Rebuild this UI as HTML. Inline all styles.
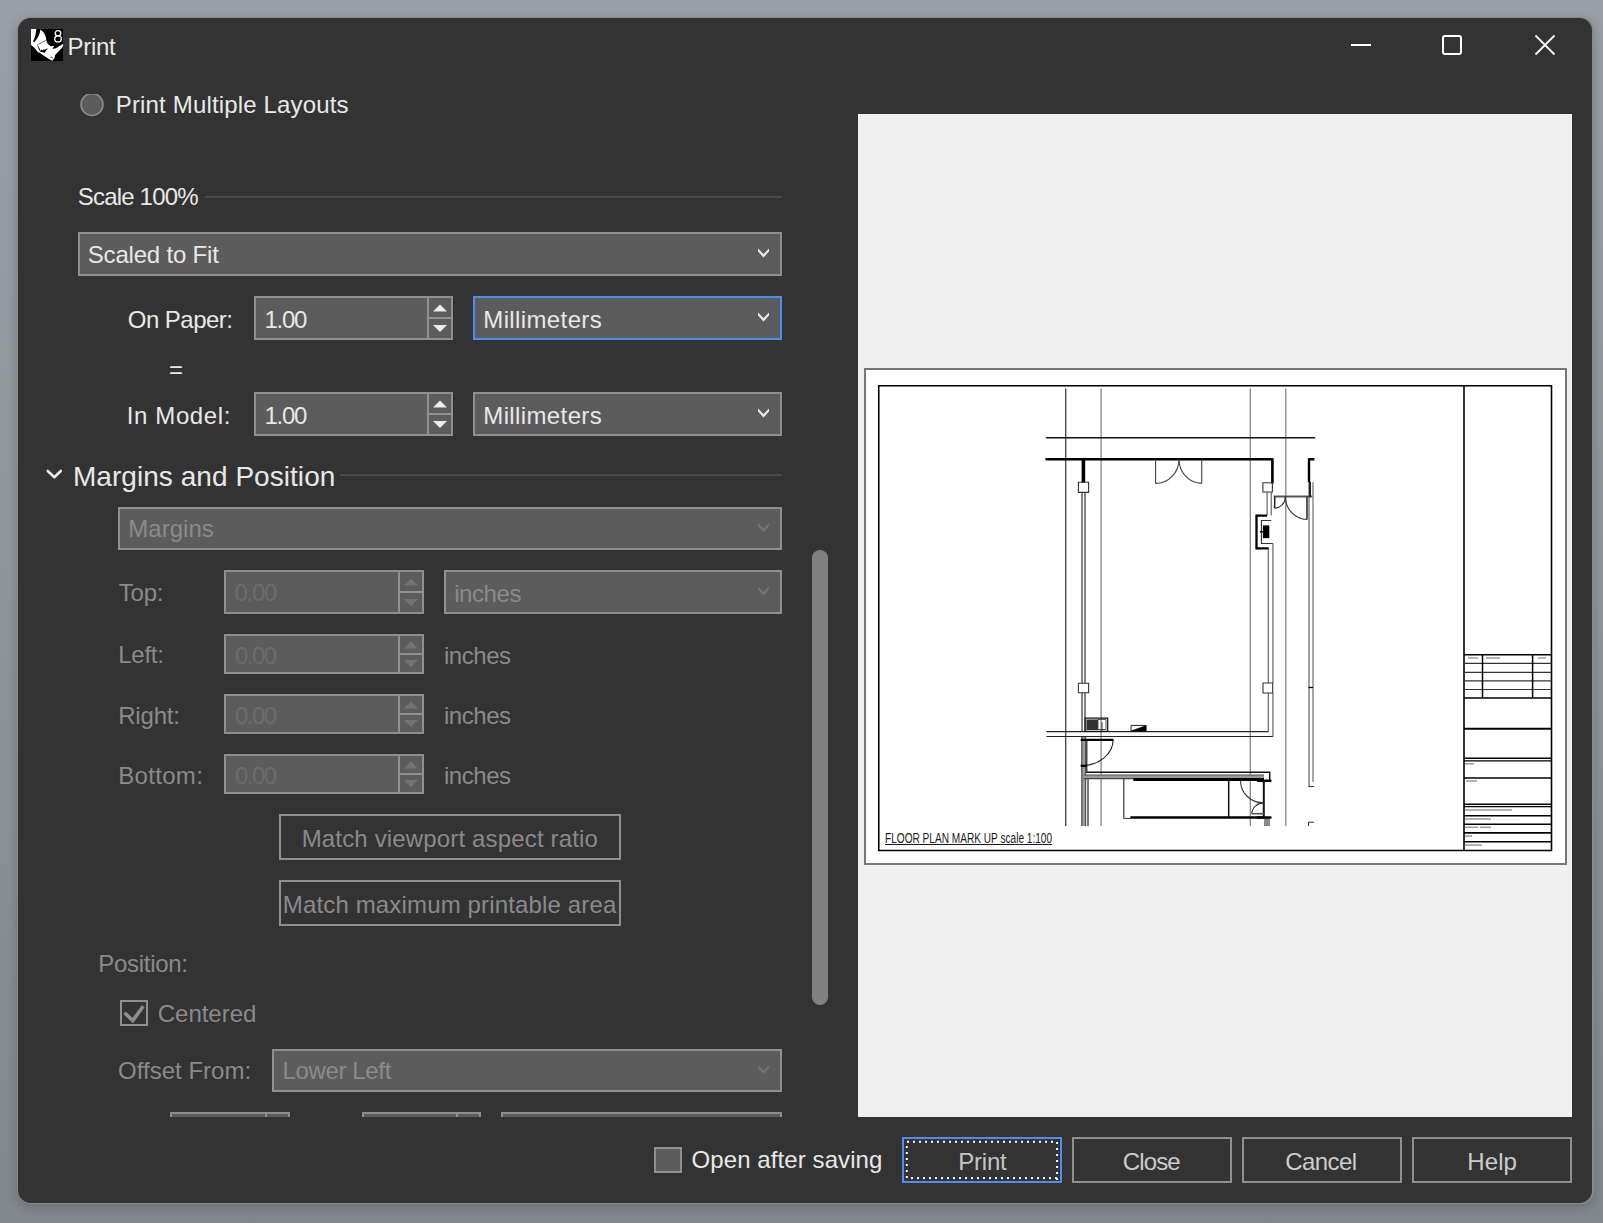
<!DOCTYPE html>
<html><head><meta charset="utf-8">
<style>
html,body{margin:0;padding:0;}
body{width:1603px;height:1223px;overflow:hidden;position:relative;
 background:linear-gradient(180deg,#9a9ea6 0%,#90959c 50%,#82878e 100%);
 font-family:"Liberation Sans",sans-serif;}
.winb{position:absolute;left:16.5px;top:16.5px;width:1577px;height:1187.5px;border-radius:14px;background:#8a8a8a;
 box-shadow:0 3px 12px rgba(0,0,0,0.20);}
.win{position:absolute;left:18px;top:18px;width:1574px;height:1185px;border-radius:12.5px;background:#333333;}
.a{position:absolute;}
.t{position:absolute;white-space:nowrap;font-size:24px;line-height:24px;color:#f0f0f0;}
</style></head><body>
<div class="winb"></div><div class="win"></div>
<svg class="a" style="left:31px;top:29px" width="32" height="32" viewBox="0 0 32 32"><rect width="32" height="32" fill="#000"/><path d="M0 0H9.2L9.4 1C12.6 2.2 14.6 5.6 15.3 10.9C15.8 14.2 18.2 17 21 17.3C21.8 17.3 22.6 17 23.2 16.5C22.8 17.8 22.2 18.9 21.5 19.8C23.5 20.2 26 19 32 14.8V17.6C29.5 20.5 26.5 23.5 24.2 26L23.5 29L21.6 31.6L20 31.2C16 28.8 12 26.2 8.2 23.6L7 23.2C5 20.6 2.6 18 0 16Z" fill="#fff"/><path d="M5.3 -0.2C5.1 4 4.2 8 2.3 12C2 12.8 2.5 13.6 3.2 13.2C5 11.8 6.8 8.5 8 6C8.6 4.4 9.1 2.4 9.3 0.9L9.3 -0.2Z" fill="#000"/><path d="M6.3 16L15.3 11" stroke="#000" stroke-width="0.8" stroke-dasharray="1 0.6"/><path d="M6.3 16.2C7.2 17 8 18.2 8.6 19.6L9.4 22.2L10 20.2L11.5 21.5L12.2 20.6L13.2 20.8L16.8 19.2C15.8 20.8 14.6 22.4 13.8 23.8L9.2 22.8C8.2 21 7.2 19 6.3 16.2Z" fill="#000"/><path d="M19.6 28.8L20.6 27.8L21.4 29.4" stroke="#000" stroke-width="0.7" fill="none"/><ellipse cx="27" cy="4.3" rx="2.8" ry="2.6" stroke="#fff" stroke-width="1.3" fill="none"/><ellipse cx="27" cy="9.9" rx="3.3" ry="3.0" stroke="#fff" stroke-width="1.3" fill="none"/></svg>
<div class="t" style="left:67.50px;top:34.68px;font-size:24px;line-height:24px;color:#e8e8e8;letter-spacing:-0.295px;">Print</div>
<div class="a" style="left:1351px;top:44px;width:20px;height:2px;background:#fff;"></div>
<div class="a" style="left:1442px;top:35px;width:20px;height:20px;box-sizing:border-box;border:2px solid #fff;border-radius:3px"></div>
<div class="t" style="left:115.80px;top:92.98px;font-size:24px;line-height:24px;color:#e8e8e8;letter-spacing:0.155px;">Print Multiple Layouts</div>
<div class="t" style="left:77.75px;top:185.43px;font-size:24px;line-height:24px;color:#e8e8e8;letter-spacing:-0.805px;">Scale 100%</div>
<div class="a" style="left:205px;top:196px;width:577px;height:2px;background:#4a4a4a;"></div>
<div class="a" style="left:78px;top:232px;width:704px;height:44px;box-sizing:border-box;border:2px solid #8f8f8f;background:#5c5c5c;"></div>
<div class="t" style="left:87.75px;top:242.93px;font-size:24px;line-height:24px;color:#e8e8e8;letter-spacing:-0.186px;">Scaled to Fit</div>
<div class="t" style="left:127.75px;top:307.68px;font-size:24px;line-height:24px;color:#e8e8e8;letter-spacing:-0.528px;">On Paper:</div>
<div class="a" style="left:254px;top:296px;width:199px;height:44px;box-sizing:border-box;border:2px solid #8f8f8f;background:#5c5c5c;"></div>
<div class="a" style="left:427px;top:296px;width:2px;height:44px;background:#8f8f8f;"></div>
<div class="a" style="left:427px;top:317.0px;width:26px;height:2px;background:#8f8f8f;"></div>
<div class="t" style="left:264.50px;top:307.68px;font-size:24px;line-height:24px;color:#e8e8e8;letter-spacing:-1.288px;">1.00</div>
<div class="a" style="left:473px;top:296px;width:309px;height:44px;box-sizing:border-box;border:2px solid #4c8df6;background:#5c5c5c;"></div>
<div class="t" style="left:483.25px;top:307.98px;font-size:24px;line-height:24px;color:#e8e8e8;letter-spacing:0.383px;">Millimeters</div>
<div class="t" style="left:169.00px;top:357.68px;font-size:24px;line-height:24px;color:#e8e8e8;letter-spacing:0.000px;">=</div>
<div class="t" style="left:126.75px;top:403.93px;font-size:24px;line-height:24px;color:#e8e8e8;letter-spacing:0.619px;">In Model:</div>
<div class="a" style="left:254px;top:392px;width:199px;height:44px;box-sizing:border-box;border:2px solid #8f8f8f;background:#5c5c5c;"></div>
<div class="a" style="left:427px;top:392px;width:2px;height:44px;background:#8f8f8f;"></div>
<div class="a" style="left:427px;top:413.0px;width:26px;height:2px;background:#8f8f8f;"></div>
<div class="t" style="left:264.50px;top:403.68px;font-size:24px;line-height:24px;color:#e8e8e8;letter-spacing:-1.288px;">1.00</div>
<div class="a" style="left:473px;top:392px;width:309px;height:44px;box-sizing:border-box;border:2px solid #8f8f8f;background:#5c5c5c;"></div>
<div class="t" style="left:483.25px;top:404.18px;font-size:24px;line-height:24px;color:#e8e8e8;letter-spacing:0.383px;">Millimeters</div>
<div class="t" style="left:73.00px;top:463.30px;font-size:28px;line-height:28px;color:#e8e8e8;letter-spacing:0.045px;">Margins and Position</div>
<div class="a" style="left:340px;top:474px;width:442px;height:2px;background:#4a4a4a;"></div>
<div class="a" style="left:118px;top:507px;width:664px;height:43px;box-sizing:border-box;border:2px solid #8f8f8f;background:#5c5c5c;"></div>
<div class="t" style="left:128.25px;top:517.18px;font-size:24px;line-height:24px;color:#8a8a8a;letter-spacing:0.023px;">Margins</div>
<div class="t" style="left:118.75px;top:580.93px;font-size:24px;line-height:24px;color:#8a8a8a;letter-spacing:-0.232px;">Top:</div>
<div class="a" style="left:224px;top:570px;width:200px;height:44px;box-sizing:border-box;border:2px solid #8f8f8f;background:#5c5c5c;"></div>
<div class="a" style="left:398px;top:570px;width:2px;height:44px;background:#8f8f8f;"></div>
<div class="a" style="left:398px;top:591.0px;width:26px;height:2px;background:#8f8f8f;"></div>
<div class="t" style="left:234.50px;top:581.18px;font-size:24px;line-height:24px;color:#6c6c6c;letter-spacing:-1.288px;">0.00</div>
<div class="a" style="left:444px;top:570px;width:338px;height:44px;box-sizing:border-box;border:2px solid #8f8f8f;background:#5c5c5c;"></div>
<div class="t" style="left:454.20px;top:581.58px;font-size:24px;line-height:24px;color:#8a8a8a;letter-spacing:-0.415px;">inches</div>
<div class="t" style="left:118.20px;top:643.48px;font-size:24px;line-height:24px;color:#8a8a8a;letter-spacing:-0.233px;">Left:</div>
<div class="a" style="left:224px;top:634px;width:200px;height:40px;box-sizing:border-box;border:2px solid #8f8f8f;background:#5c5c5c;"></div>
<div class="a" style="left:398px;top:634px;width:2px;height:40px;background:#8f8f8f;"></div>
<div class="a" style="left:398px;top:653.0px;width:26px;height:2px;background:#8f8f8f;"></div>
<div class="t" style="left:235.00px;top:643.68px;font-size:24px;line-height:24px;color:#6c6c6c;letter-spacing:-1.554px;">0.00</div>
<div class="t" style="left:444.00px;top:643.68px;font-size:24px;line-height:24px;color:#8a8a8a;letter-spacing:-0.475px;">inches</div>
<div class="t" style="left:118.20px;top:703.78px;font-size:24px;line-height:24px;color:#8a8a8a;letter-spacing:-0.185px;">Right:</div>
<div class="a" style="left:224px;top:694px;width:200px;height:40px;box-sizing:border-box;border:2px solid #8f8f8f;background:#5c5c5c;"></div>
<div class="a" style="left:398px;top:694px;width:2px;height:40px;background:#8f8f8f;"></div>
<div class="a" style="left:398px;top:713.0px;width:26px;height:2px;background:#8f8f8f;"></div>
<div class="t" style="left:235.00px;top:703.68px;font-size:24px;line-height:24px;color:#6c6c6c;letter-spacing:-1.554px;">0.00</div>
<div class="t" style="left:444.00px;top:703.68px;font-size:24px;line-height:24px;color:#8a8a8a;letter-spacing:-0.475px;">inches</div>
<div class="t" style="left:118.20px;top:763.58px;font-size:24px;line-height:24px;color:#8a8a8a;letter-spacing:0.328px;">Bottom:</div>
<div class="a" style="left:224px;top:754px;width:200px;height:40px;box-sizing:border-box;border:2px solid #8f8f8f;background:#5c5c5c;"></div>
<div class="a" style="left:398px;top:754px;width:2px;height:40px;background:#8f8f8f;"></div>
<div class="a" style="left:398px;top:773.0px;width:26px;height:2px;background:#8f8f8f;"></div>
<div class="t" style="left:235.00px;top:763.68px;font-size:24px;line-height:24px;color:#6c6c6c;letter-spacing:-1.554px;">0.00</div>
<div class="t" style="left:444.00px;top:763.68px;font-size:24px;line-height:24px;color:#8a8a8a;letter-spacing:-0.475px;">inches</div>
<div class="a" style="left:279px;top:814px;width:342px;height:46px;box-sizing:border-box;border:2px solid #8f8f8f;background:#333333;"></div>
<div class="t" style="left:301.70px;top:827.08px;font-size:24px;line-height:24px;color:#8a8a8a;letter-spacing:0.155px;">Match viewport aspect ratio</div>
<div class="a" style="left:279px;top:880px;width:342px;height:46px;box-sizing:border-box;border:2px solid #8f8f8f;background:#333333;"></div>
<div class="t" style="left:282.80px;top:893.08px;font-size:24px;line-height:24px;color:#8a8a8a;letter-spacing:0.151px;">Match maximum printable area</div>
<div class="t" style="left:98.30px;top:951.78px;font-size:24px;line-height:24px;color:#8a8a8a;letter-spacing:-0.298px;">Position:</div>
<div class="a" style="left:120px;top:1000px;width:28px;height:26px;box-sizing:border-box;border:2px solid #8f8f8f;background:#333333;"></div>
<div class="t" style="left:157.75px;top:1001.58px;font-size:24px;line-height:24px;color:#8a8a8a;letter-spacing:-0.019px;">Centered</div>
<div class="t" style="left:118.00px;top:1059.48px;font-size:24px;line-height:24px;color:#8a8a8a;letter-spacing:0.023px;">Offset From:</div>
<div class="a" style="left:272px;top:1049px;width:510px;height:43px;box-sizing:border-box;border:2px solid #8f8f8f;background:#5c5c5c;"></div>
<div class="t" style="left:282.40px;top:1059.48px;font-size:24px;line-height:24px;color:#8a8a8a;letter-spacing:-0.344px;">Lower Left</div>
<div class="a" style="left:170px;top:1112px;width:120px;height:5px;background:#5c5c5c;border:2px solid #8c8c8c;border-bottom:none;box-sizing:border-box"></div>
<div class="a" style="left:265px;top:1112px;width:2px;height:5px;background:#8f8f8f;"></div>
<div class="a" style="left:362px;top:1112px;width:119px;height:5px;background:#5c5c5c;border:2px solid #8c8c8c;border-bottom:none;box-sizing:border-box"></div>
<div class="a" style="left:456px;top:1112px;width:2px;height:5px;background:#8f8f8f;"></div>
<div class="a" style="left:501px;top:1112px;width:281px;height:5px;background:#5c5c5c;border:2px solid #8c8c8c;border-bottom:none;box-sizing:border-box"></div>
<div class="a" style="left:812px;top:550px;width:16px;height:455px;background:#808080;border-radius:8px"></div>
<div class="a" style="left:858px;top:114px;width:714px;height:1003px;background:#f0f0f0;"></div>
<div class="a" style="left:864px;top:368px;width:703px;height:497px;box-sizing:border-box;border:2px solid #777;background:#fff"></div>
<div class="t" style="left:884.9px;top:830.85px;font-size:14px;line-height:14px;color:#1a1a1a;transform-origin:0 0;transform:scaleX(0.7215);text-decoration:underline;text-decoration-thickness:1px;text-underline-offset:1px">FLOOR PLAN MARK UP scale 1:100</div>
<div class="a" style="left:654px;top:1147px;width:28px;height:26px;box-sizing:border-box;border:2px solid #8f8f8f;background:#5c5c5c;"></div>
<div class="t" style="left:691.50px;top:1148.48px;font-size:24px;line-height:24px;color:#e8e8e8;letter-spacing:0.088px;">Open after saving</div>
<div class="a" style="left:902px;top:1137px;width:160px;height:46px;box-sizing:border-box;border:2px solid #4c8df6;background:#333333;"></div>
<div class="t" style="left:958.30px;top:1149.58px;font-size:24px;line-height:24px;color:#c4c4c4;letter-spacing:-0.245px;">Print</div>
<div class="a" style="left:1072px;top:1137px;width:160px;height:46px;box-sizing:border-box;border:2px solid #8f8f8f;background:#333333;"></div>
<div class="t" style="left:1122.70px;top:1149.78px;font-size:24px;line-height:24px;color:#cccccc;letter-spacing:-0.853px;">Close</div>
<div class="a" style="left:1242px;top:1137px;width:160px;height:46px;box-sizing:border-box;border:2px solid #8f8f8f;background:#333333;"></div>
<div class="t" style="left:1285.30px;top:1149.78px;font-size:24px;line-height:24px;color:#cccccc;letter-spacing:-0.595px;">Cancel</div>
<div class="a" style="left:1412px;top:1137px;width:160px;height:46px;box-sizing:border-box;border:2px solid #8f8f8f;background:#333333;"></div>
<div class="t" style="left:1467.20px;top:1149.78px;font-size:24px;line-height:24px;color:#cccccc;letter-spacing:0.129px;">Help</div>
<svg class="a" style="left:0;top:0" width="1603" height="1223" viewBox="0 0 1603 1223"><path d="M1535.5 35.5L1554.5 54.5M1554.5 35.5L1535.5 54.5" stroke="#fff" stroke-width="1.8" fill="none"/>
<clipPath id="rc"><rect x="0" y="94" width="850" height="1023"/></clipPath>
<circle cx="92" cy="104.5" r="11" fill="#5c5c5c" stroke="#8c8c8c" stroke-width="1.6" clip-path="url(#rc)"/>
<path d="M758.00 248.60 L763.50 254.10 L769.00 248.60 L769.00 251.60 L763.50 257.40 L758.00 251.60Z" fill="#ebebeb"/>
<path d="M433.00 311.60 L440.00 304.40 L447.00 311.60Z" fill="#ebebeb"/>
<path d="M433.00 324.90 L440.00 332.10 L447.00 324.90Z" fill="#ebebeb"/>
<path d="M758.00 312.60 L763.50 318.10 L769.00 312.60 L769.00 315.60 L763.50 321.40 L758.00 315.60Z" fill="#ebebeb"/>
<path d="M433.00 407.60 L440.00 400.40 L447.00 407.60Z" fill="#ebebeb"/>
<path d="M433.00 420.90 L440.00 428.10 L447.00 420.90Z" fill="#ebebeb"/>
<path d="M758.00 408.60 L763.50 414.10 L769.00 408.60 L769.00 411.60 L763.50 417.40 L758.00 411.60Z" fill="#ebebeb"/>
<path d="M47.8 471L54.3 477.2L60.8 471" stroke="#ececec" stroke-width="2.6" stroke-linecap="round" stroke-linejoin="round" fill="none"/>
<path d="M758.00 523.10 L763.50 528.60 L769.00 523.10 L769.00 526.10 L763.50 531.90 L758.00 526.10Z" fill="#737373"/>
<path d="M404.00 585.60 L411.00 578.40 L418.00 585.60Z" fill="#737373"/>
<path d="M404.00 598.90 L411.00 606.10 L418.00 598.90Z" fill="#737373"/>
<path d="M758.00 586.60 L763.50 592.10 L769.00 586.60 L769.00 589.60 L763.50 595.40 L758.00 589.60Z" fill="#737373"/>
<path d="M404.00 648.60 L411.00 641.40 L418.00 648.60Z" fill="#737373"/>
<path d="M404.00 659.90 L411.00 667.10 L418.00 659.90Z" fill="#737373"/>
<path d="M404.00 708.60 L411.00 701.40 L418.00 708.60Z" fill="#737373"/>
<path d="M404.00 719.90 L411.00 727.10 L418.00 719.90Z" fill="#737373"/>
<path d="M404.00 768.60 L411.00 761.40 L418.00 768.60Z" fill="#737373"/>
<path d="M404.00 779.90 L411.00 787.10 L418.00 779.90Z" fill="#737373"/>
<path d="M124.5 1012.8L132.8 1020.6L143.2 1006.2" stroke="#8f8f8f" stroke-width="3.6" fill="none"/>
<path d="M758.00 1065.10 L763.50 1070.60 L769.00 1065.10 L769.00 1068.10 L763.50 1073.90 L758.00 1068.10Z" fill="#737373"/>
<path d="M878.75 385.75H1551.5V850.5H878.75Z" stroke="#000" stroke-width="1.6" fill="none" />
<line x1="1464" y1="385.75" x2="1464" y2="850.5" stroke="#000" stroke-width="1.6" stroke-linecap="butt"/>
<line x1="1065.7" y1="388.5" x2="1065.7" y2="826" stroke="#444" stroke-width="1.3" stroke-linecap="butt"/>
<line x1="1101.1" y1="388.5" x2="1101.1" y2="826" stroke="#858585" stroke-width="1.3" stroke-linecap="butt"/>
<line x1="1250.3" y1="388.5" x2="1250.3" y2="826" stroke="#858585" stroke-width="1.3" stroke-linecap="butt"/>
<line x1="1285.8" y1="388.5" x2="1285.8" y2="826" stroke="#858585" stroke-width="1.3" stroke-linecap="butt"/>
<line x1="1046.5" y1="437.8" x2="1314.6" y2="437.8" stroke="#111" stroke-width="1.6" stroke-linecap="round"/>
<path d="M1046.5 459.3H1272.4V482.7" stroke="#000" stroke-width="2.6" fill="none" stroke-linecap="round" stroke-linejoin="round"/>
<path d="M1314.4 459.3H1309V482.2" stroke="#000" stroke-width="2.4" fill="none" stroke-linejoin="round"/>
<line x1="1083.4" y1="459.3" x2="1083.4" y2="482.5" stroke="#000" stroke-width="3.6" stroke-linecap="butt"/>
<path d="M1078.4 482.3H1088.6V492.4H1078.4Z" stroke="#333" stroke-width="1.1" fill="none" />
<line x1="1082" y1="492.4" x2="1082" y2="683.2" stroke="#333" stroke-width="1.2" stroke-linecap="butt"/>
<line x1="1085" y1="492.4" x2="1085" y2="683.2" stroke="#333" stroke-width="1.2" stroke-linecap="butt"/>
<path d="M1078.4 683.2H1088.6V692.8H1078.4Z" stroke="#333" stroke-width="1.1" fill="none" />
<line x1="1082" y1="692.8" x2="1082" y2="731.6" stroke="#333" stroke-width="1.2" stroke-linecap="butt"/>
<line x1="1085" y1="692.8" x2="1085" y2="731.6" stroke="#333" stroke-width="1.2" stroke-linecap="butt"/>
<line x1="1155.6" y1="459.3" x2="1155.6" y2="483.4" stroke="#444" stroke-width="1.1" stroke-linecap="butt"/>
<path d="M1155.6 483.4A23.5 24 0 0 0 1179 459.3" stroke="#444" stroke-width="1.1" fill="none" />
<line x1="1201.7" y1="459.3" x2="1201.7" y2="483.4" stroke="#444" stroke-width="1.1" stroke-linecap="butt"/>
<path d="M1201.7 483.4A23 24 0 0 1 1179 459.3" stroke="#444" stroke-width="1.1" fill="none" />
<path d="M1262.9 482.7H1272.4V492H1262.9Z" stroke="#333" stroke-width="1.1" fill="none" />
<line x1="1267.1" y1="492" x2="1267.1" y2="515.6" stroke="#555" stroke-width="1.1" stroke-linecap="butt"/>
<line x1="1271.2" y1="492" x2="1271.2" y2="515.6" stroke="#555" stroke-width="1.1" stroke-linecap="butt"/>
<path d="M1267 515.6H1256.5V548.4H1268.8" stroke="#000" stroke-width="2.3" fill="none" />
<path d="M1271.2 520.5H1261.4V543.5H1272.9" stroke="#333" stroke-width="1.1" fill="none" />
<rect x="1262.9" y="525.4" width="6.4" height="12.7" fill="#000"/>
<line x1="1260" y1="531.8" x2="1264" y2="531.8" stroke="#000" stroke-width="1.5" stroke-linecap="butt"/>
<line x1="1268.3" y1="548.4" x2="1268.3" y2="683" stroke="#555" stroke-width="1.1" stroke-linecap="butt"/>
<line x1="1272.9" y1="543.5" x2="1272.9" y2="683" stroke="#555" stroke-width="1.1" stroke-linecap="butt"/>
<path d="M1263 683H1272.7V693H1263Z" stroke="#333" stroke-width="1.1" fill="none" />
<line x1="1268.3" y1="693" x2="1268.3" y2="731.6" stroke="#555" stroke-width="1.1" stroke-linecap="butt"/>
<line x1="1272.9" y1="693" x2="1272.9" y2="736.5" stroke="#555" stroke-width="1.1" stroke-linecap="butt"/>
<line x1="1273.7" y1="496.4" x2="1312.4" y2="496.4" stroke="#555" stroke-width="2" stroke-linecap="butt"/>
<line x1="1274.7" y1="496.4" x2="1274.7" y2="508.2" stroke="#222" stroke-width="1.5" stroke-linecap="butt"/>
<path d="M1274.7 508.2A10.7 11.8 0 0 0 1285.4 496.4" stroke="#333" stroke-width="1.1" fill="none" />
<line x1="1307" y1="496.4" x2="1307" y2="519.5" stroke="#222" stroke-width="1.5" stroke-linecap="butt"/>
<path d="M1307 519.5A21.6 23.1 0 0 1 1285.4 496.4" stroke="#333" stroke-width="1.1" fill="none" />
<line x1="1309" y1="482.2" x2="1309" y2="786.5" stroke="#555" stroke-width="1.1" stroke-linecap="butt"/>
<line x1="1313" y1="482.2" x2="1313" y2="782" stroke="#777" stroke-width="1.3" stroke-linecap="butt"/>
<line x1="1308.5" y1="786.5" x2="1314" y2="786.5" stroke="#333" stroke-width="1.1" stroke-linecap="butt"/>
<line x1="1308.5" y1="687.5" x2="1313" y2="687.5" stroke="#000" stroke-width="1.3" stroke-linecap="butt"/>
<path d="M1314 822.2H1308.5V826" stroke="#333" stroke-width="1.1" fill="none" />
<line x1="1310" y1="482" x2="1310" y2="497" stroke="#222" stroke-width="2" stroke-linecap="butt"/>
<path d="M1046.4 731.6H1268.4" stroke="#222" stroke-width="1.2" fill="none" />
<path d="M1046.4 736.5H1272.9" stroke="#222" stroke-width="1.2" fill="none" />
<path d="M1085.1 718.1H1107.7V731.3H1085.1Z" stroke="#111" stroke-width="1.2" fill="none" />
<rect x="1086.5" y="719.5" width="11.5" height="10.5" fill="#222"/>
<line x1="1086.5" y1="721" x2="1098" y2="721" stroke="#666" stroke-width="0.5" stroke-linecap="butt"/>
<line x1="1086.5" y1="723" x2="1098" y2="723" stroke="#666" stroke-width="0.5" stroke-linecap="butt"/>
<line x1="1086.5" y1="725" x2="1098" y2="725" stroke="#666" stroke-width="0.5" stroke-linecap="butt"/>
<line x1="1086.5" y1="727" x2="1098" y2="727" stroke="#666" stroke-width="0.5" stroke-linecap="butt"/>
<line x1="1086.5" y1="729" x2="1098" y2="729" stroke="#666" stroke-width="0.5" stroke-linecap="butt"/>
<path d="M1098 719.5H1106V729.5H1098Z" stroke="#444" stroke-width="0.9" fill="none" />
<line x1="1102" y1="722" x2="1102" y2="731" stroke="#333" stroke-width="0.9" stroke-linecap="butt"/>
<path d="M1131 725.4H1146V731H1131Z" stroke="#222" stroke-width="1" fill="none" />
<path d="M1131 731L1146 725.5V731Z" stroke="#000" stroke-width="0.5" fill="#000" />
<path d="M1113.1 739.7A32 26 0 0 1 1081.2 765.7" stroke="#222" stroke-width="1.1" fill="none" />
<rect x="1081.5" y="737" width="4.3" height="89" fill="#9a9a9a"/>
<line x1="1081.8" y1="737" x2="1081.8" y2="826" stroke="#555" stroke-width="1.2" stroke-linecap="butt"/>
<line x1="1085.6" y1="737" x2="1085.6" y2="826" stroke="#555" stroke-width="1.2" stroke-linecap="butt"/>
<line x1="1088" y1="778" x2="1088" y2="826" stroke="#444" stroke-width="1.4" stroke-linecap="butt"/>
<line x1="1086.8" y1="740" x2="1086.8" y2="772.2" stroke="#222" stroke-width="1.2" stroke-linecap="butt"/>
<line x1="1080.7" y1="739.8" x2="1113.4" y2="739.8" stroke="#000" stroke-width="2.3" stroke-linecap="butt"/>
<line x1="1080.7" y1="765.8" x2="1086.8" y2="765.8" stroke="#000" stroke-width="2.4" stroke-linecap="butt"/>
<path d="M1086.2 772.2H1269.7V781" stroke="#111" stroke-width="1.5" fill="none" />
<rect x="1083.7" y="775" width="180.3" height="3.6" fill="#9a9a9a"/>
<line x1="1083.7" y1="775" x2="1264" y2="775" stroke="#555" stroke-width="1.1" stroke-linecap="butt"/>
<line x1="1083.7" y1="778.6" x2="1264" y2="778.6" stroke="#444" stroke-width="1.1" stroke-linecap="butt"/>
<line x1="1133.4" y1="779.6" x2="1264" y2="779.6" stroke="#000" stroke-width="3" stroke-linecap="butt"/>
<line x1="1258" y1="780.8" x2="1270.4" y2="780.8" stroke="#000" stroke-width="2.5" stroke-linecap="round"/>
<line x1="1123.8" y1="778" x2="1123.8" y2="818.4" stroke="#444" stroke-width="1.3" stroke-linecap="butt"/>
<line x1="1123.8" y1="818.4" x2="1131" y2="818.4" stroke="#333" stroke-width="1" stroke-linecap="butt"/>
<line x1="1130.4" y1="817.5" x2="1264" y2="817.5" stroke="#000" stroke-width="2.6" stroke-linecap="butt"/>
<line x1="1228.7" y1="781" x2="1228.7" y2="817.2" stroke="#111" stroke-width="1.5" stroke-linecap="butt"/>
<line x1="1263.8" y1="781" x2="1263.8" y2="817.5" stroke="#111" stroke-width="2" stroke-linecap="butt"/>
<path d="M1240.5 781A23.3 22 0 0 0 1263.8 802.9" stroke="#333" stroke-width="1.1" fill="none" />
<path d="M1263.8 802.9A12 11 0 0 0 1251.8 813.7" stroke="#333" stroke-width="1.1" fill="none" />
<line x1="1251.8" y1="813.7" x2="1263.8" y2="813.7" stroke="#555" stroke-width="1.6" stroke-linecap="butt"/>
<rect x="1264" y="817" width="6" height="9" fill="#8a8a8a"/>
<line x1="1258" y1="817.6" x2="1270.4" y2="817.6" stroke="#000" stroke-width="2.5" stroke-linecap="round"/>
<line x1="1464" y1="654.7" x2="1551.5" y2="654.7" stroke="#000" stroke-width="1.5" stroke-linecap="butt"/>
<line x1="1464" y1="663.3" x2="1551.5" y2="663.3" stroke="#333" stroke-width="1.2" stroke-linecap="butt"/>
<line x1="1464" y1="672.3" x2="1551.5" y2="672.3" stroke="#333" stroke-width="1.2" stroke-linecap="butt"/>
<line x1="1464" y1="680.9" x2="1551.5" y2="680.9" stroke="#333" stroke-width="1.2" stroke-linecap="butt"/>
<line x1="1464" y1="689.5" x2="1551.5" y2="689.5" stroke="#333" stroke-width="1.2" stroke-linecap="butt"/>
<line x1="1464" y1="698" x2="1551.5" y2="698" stroke="#000" stroke-width="1.5" stroke-linecap="butt"/>
<line x1="1482.5" y1="654.7" x2="1482.5" y2="698" stroke="#000" stroke-width="1.5" stroke-linecap="butt"/>
<line x1="1532.6" y1="654.7" x2="1532.6" y2="698" stroke="#000" stroke-width="1.5" stroke-linecap="butt"/>
<line x1="1464" y1="728.7" x2="1551.5" y2="728.7" stroke="#000" stroke-width="2" stroke-linecap="butt"/>
<line x1="1464" y1="758.3" x2="1551.5" y2="758.3" stroke="#000" stroke-width="1.4" stroke-linecap="butt"/>
<line x1="1464" y1="760.8" x2="1551.5" y2="760.8" stroke="#000" stroke-width="1.2" stroke-linecap="butt"/>
<line x1="1464" y1="778" x2="1551.5" y2="778" stroke="#000" stroke-width="1.6" stroke-linecap="butt"/>
<line x1="1464" y1="804.2" x2="1551.5" y2="804.2" stroke="#000" stroke-width="1.4" stroke-linecap="butt"/>
<line x1="1464" y1="806.7" x2="1551.5" y2="806.7" stroke="#000" stroke-width="1.2" stroke-linecap="butt"/>
<line x1="1464" y1="815.8" x2="1551.5" y2="815.8" stroke="#000" stroke-width="1.6" stroke-linecap="butt"/>
<line x1="1464" y1="824.3" x2="1551.5" y2="824.3" stroke="#000" stroke-width="1.6" stroke-linecap="butt"/>
<line x1="1464" y1="832.9" x2="1551.5" y2="832.9" stroke="#000" stroke-width="1.6" stroke-linecap="butt"/>
<line x1="1464" y1="841.7" x2="1551.5" y2="841.7" stroke="#000" stroke-width="1.6" stroke-linecap="butt"/>
<line x1="1468" y1="658" x2="1478" y2="658" stroke="#9a9a9a" stroke-width="1.5" stroke-linecap="butt"/>
<line x1="1486" y1="658" x2="1500" y2="658" stroke="#9a9a9a" stroke-width="1.5" stroke-linecap="butt"/>
<line x1="1538" y1="658" x2="1546" y2="658" stroke="#9a9a9a" stroke-width="1.5" stroke-linecap="butt"/>
<line x1="1465" y1="763.8" x2="1474" y2="763.8" stroke="#9a9a9a" stroke-width="1.5" stroke-linecap="butt"/>
<line x1="1466" y1="781" x2="1477" y2="781" stroke="#9a9a9a" stroke-width="1.5" stroke-linecap="butt"/>
<line x1="1465" y1="810" x2="1512" y2="810" stroke="#9a9a9a" stroke-width="1.5" stroke-linecap="butt"/>
<line x1="1465" y1="819" x2="1491" y2="819" stroke="#9a9a9a" stroke-width="1.5" stroke-linecap="butt"/>
<line x1="1465" y1="827.3" x2="1478" y2="827.3" stroke="#9a9a9a" stroke-width="1.5" stroke-linecap="butt"/>
<line x1="1480" y1="827.3" x2="1491" y2="827.3" stroke="#9a9a9a" stroke-width="1.5" stroke-linecap="butt"/>
<line x1="1465" y1="836" x2="1472" y2="836" stroke="#9a9a9a" stroke-width="1.5" stroke-linecap="butt"/>
<line x1="1465" y1="845" x2="1482" y2="845" stroke="#9a9a9a" stroke-width="1.5" stroke-linecap="butt"/>
<line x1="1493" y1="819.3" x2="1521" y2="819.3" stroke="#f4f0d0" stroke-width="1" stroke-linecap="butt"/>
<rect x="907.0" y="1140.8" width="2" height="2" fill="#fff"/><rect x="913.0" y="1140.8" width="2" height="2" fill="#fff"/><rect x="919.0" y="1140.8" width="2" height="2" fill="#fff"/><rect x="925.0" y="1140.8" width="2" height="2" fill="#fff"/><rect x="931.0" y="1140.8" width="2" height="2" fill="#fff"/><rect x="937.0" y="1140.8" width="2" height="2" fill="#fff"/><rect x="943.0" y="1140.8" width="2" height="2" fill="#fff"/><rect x="949.0" y="1140.8" width="2" height="2" fill="#fff"/><rect x="955.0" y="1140.8" width="2" height="2" fill="#fff"/><rect x="961.0" y="1140.8" width="2" height="2" fill="#fff"/><rect x="967.0" y="1140.8" width="2" height="2" fill="#fff"/><rect x="973.0" y="1140.8" width="2" height="2" fill="#fff"/><rect x="979.0" y="1140.8" width="2" height="2" fill="#fff"/><rect x="985.0" y="1140.8" width="2" height="2" fill="#fff"/><rect x="991.0" y="1140.8" width="2" height="2" fill="#fff"/><rect x="997.0" y="1140.8" width="2" height="2" fill="#fff"/><rect x="1003.0" y="1140.8" width="2" height="2" fill="#fff"/><rect x="1009.0" y="1140.8" width="2" height="2" fill="#fff"/><rect x="1015.0" y="1140.8" width="2" height="2" fill="#fff"/><rect x="1021.0" y="1140.8" width="2" height="2" fill="#fff"/><rect x="1027.0" y="1140.8" width="2" height="2" fill="#fff"/><rect x="1033.0" y="1140.8" width="2" height="2" fill="#fff"/><rect x="1039.0" y="1140.8" width="2" height="2" fill="#fff"/><rect x="1045.0" y="1140.8" width="2" height="2" fill="#fff"/><rect x="1051.0" y="1140.8" width="2" height="2" fill="#fff"/><rect x="911.0" y="1177.1" width="2" height="2" fill="#fff"/><rect x="917.0" y="1177.1" width="2" height="2" fill="#fff"/><rect x="923.0" y="1177.1" width="2" height="2" fill="#fff"/><rect x="929.0" y="1177.1" width="2" height="2" fill="#fff"/><rect x="935.0" y="1177.1" width="2" height="2" fill="#fff"/><rect x="941.0" y="1177.1" width="2" height="2" fill="#fff"/><rect x="947.0" y="1177.1" width="2" height="2" fill="#fff"/><rect x="953.0" y="1177.1" width="2" height="2" fill="#fff"/><rect x="959.0" y="1177.1" width="2" height="2" fill="#fff"/><rect x="965.0" y="1177.1" width="2" height="2" fill="#fff"/><rect x="971.0" y="1177.1" width="2" height="2" fill="#fff"/><rect x="977.0" y="1177.1" width="2" height="2" fill="#fff"/><rect x="983.0" y="1177.1" width="2" height="2" fill="#fff"/><rect x="989.0" y="1177.1" width="2" height="2" fill="#fff"/><rect x="995.0" y="1177.1" width="2" height="2" fill="#fff"/><rect x="1001.0" y="1177.1" width="2" height="2" fill="#fff"/><rect x="1007.0" y="1177.1" width="2" height="2" fill="#fff"/><rect x="1013.0" y="1177.1" width="2" height="2" fill="#fff"/><rect x="1019.0" y="1177.1" width="2" height="2" fill="#fff"/><rect x="1025.0" y="1177.1" width="2" height="2" fill="#fff"/><rect x="1031.0" y="1177.1" width="2" height="2" fill="#fff"/><rect x="1037.0" y="1177.1" width="2" height="2" fill="#fff"/><rect x="1043.0" y="1177.1" width="2" height="2" fill="#fff"/><rect x="1049.0" y="1177.1" width="2" height="2" fill="#fff"/><rect x="1055.0" y="1177.1" width="2" height="2" fill="#fff"/><rect x="905.8" y="1146.0" width="2" height="2" fill="#fff"/><rect x="905.8" y="1152.0" width="2" height="2" fill="#fff"/><rect x="905.8" y="1158.0" width="2" height="2" fill="#fff"/><rect x="905.8" y="1164.0" width="2" height="2" fill="#fff"/><rect x="905.8" y="1170.0" width="2" height="2" fill="#fff"/><rect x="905.8" y="1176.0" width="2" height="2" fill="#fff"/><rect x="1056.1" y="1142.0" width="2" height="2" fill="#fff"/><rect x="1056.1" y="1148.0" width="2" height="2" fill="#fff"/><rect x="1056.1" y="1154.0" width="2" height="2" fill="#fff"/><rect x="1056.1" y="1160.0" width="2" height="2" fill="#fff"/><rect x="1056.1" y="1166.0" width="2" height="2" fill="#fff"/><rect x="1056.1" y="1172.0" width="2" height="2" fill="#fff"/><rect x="1056.1" y="1178.0" width="2" height="2" fill="#fff"/></svg>
</body></html>
